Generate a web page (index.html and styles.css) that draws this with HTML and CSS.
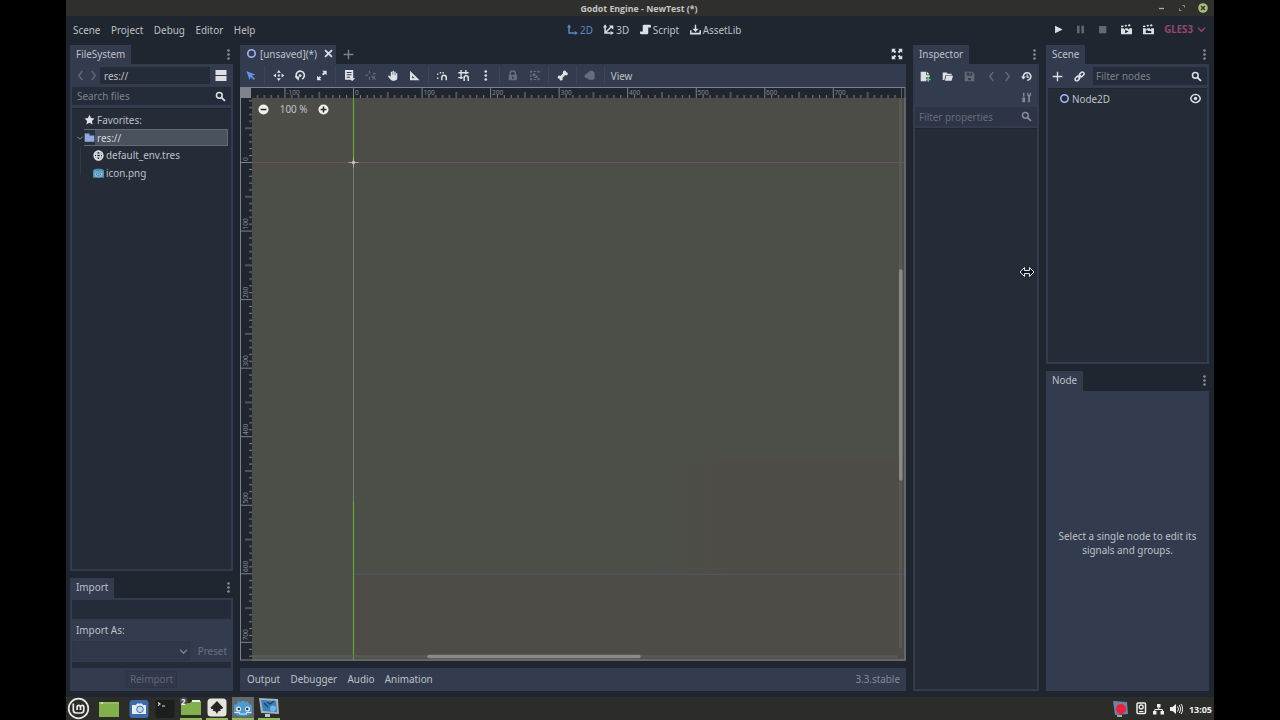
FILE: index.html
```
<!DOCTYPE html>
<html lang="en">
<head>
    <meta charset="UTF-8">
    <meta name="viewport" content="width=device-width, initial-scale=1.0">
    <title>Godot Engine - NewTest (*)</title>
    <link rel="stylesheet" href="styles.css">
</head>
<body>

    <!-- Icon set, 16x16 grid -->
    <svg class="sprite">
        <symbol id="i-dots" viewBox="0 0 16 16"><circle cx="8" cy="2.2" r="1.9"/><circle cx="8" cy="8" r="1.9"/><circle cx="8" cy="13.8" r="1.9"/></symbol>
        <symbol id="i-ring" viewBox="0 0 16 16"><circle cx="8" cy="8" r="5.4" fill="none" stroke="currentColor" stroke-width="2.3"/></symbol>
        <symbol id="i-close" viewBox="0 0 16 16"><path d="M3 3l10 10M13 3L3 13" fill="none" stroke="currentColor" stroke-width="2.6"/></symbol>
        <symbol id="i-plus" viewBox="0 0 16 16"><path d="M8 1v14M1 8h14" fill="none" stroke="currentColor" stroke-width="2"/></symbol>
        <symbol id="i-left" viewBox="0 0 16 16"><path d="M10.500 1.500L5.500 8l5 6.500" fill="none" stroke="currentColor" stroke-width="2"/></symbol>
        <symbol id="i-right" viewBox="0 0 16 16"><path d="M5.500 1.500l5 6.500-5 6.500" fill="none" stroke="currentColor" stroke-width="2"/></symbol>
        <symbol id="i-down" viewBox="0 0 16 16"><path d="M3 5.500l5 5 5-5" fill="none" stroke="currentColor" stroke-width="2"/></symbol>
        <symbol id="i-search" viewBox="0 0 16 16"><circle cx="6.300" cy="6.300" r="4.200" fill="none" stroke="currentColor" stroke-width="2.200"/><path d="M9.500 9.500l5 5" stroke="currentColor" stroke-width="2.600"/></symbol>
        <symbol id="i-split" viewBox="0 0 16 16"><path d="M0 0h16v7.200H0zM0 8.800h16V16H0z"/></symbol>
        <symbol id="i-star" viewBox="0 0 16 16"><path d="M8 1l2.200 4.700 5 .7-3.600 3.600.9 5.200L8 12.700l-4.500 2.500.9-5.200L.8 6.400l5-.7z"/></symbol>
        <symbol id="i-folder" viewBox="0 0 16 16"><path d="M1 2h7v3h7v9H1z"/></symbol>
        <symbol id="i-globe" viewBox="0 0 16 16"><circle cx="8" cy="8" r="6.300" fill="none" stroke="currentColor" stroke-width="2.400"/><ellipse cx="8" cy="8" rx="2.800" ry="6.300" fill="none" stroke="currentColor" stroke-width="1.700"/><path d="M1.500 6h13M1.500 10h13" stroke="currentColor" stroke-width="1.600"/></symbol>
        <symbol id="i-godot" viewBox="0 0 16 16"><path d="M0 3l4-2h8l4 2v11H0z" fill="#4c86ad"/><path d="M3 3l2 1h6l2-1 2 4v4H1V7z" fill="#5fa5cf"/><circle cx="4.600" cy="9" r="1.800" fill="#b7d3e3"/><circle cx="11.400" cy="9" r="1.800" fill="#b7d3e3"/><circle cx="4.800" cy="9" r=".9" fill="#333b4a"/><circle cx="11.200" cy="9" r=".9" fill="#333b4a"/><path d="M2 12h4v1h4v-1h4" stroke="#a5c8dc" fill="none"/></symbol>
        <symbol id="i-2d" viewBox="0 0 16 16"><path d="M3 4v9h8" fill="none" stroke="currentColor" stroke-width="2.200"/><path d="M0 5l3-4.500L6 5zM11 10l5 3-5 3z"/></symbol>
        <symbol id="i-3d" viewBox="0 0 16 16"><path d="M3 4v9h8M3 13l9-9" fill="none" stroke="currentColor" stroke-width="2.200"/><path d="M0 5l3-4.500L6 5zM11 10l5 3-5 3zM8.500 2H15v6.500z"/></symbol>
        <symbol id="i-script" viewBox="0 0 16 16"><path d="M6 1h8q2 0 2 2v2h-4v8q0 2-2 2H2q-2 0-2-2v-2h4V3q0-2 2-2z"/></symbol>
        <symbol id="i-asset" viewBox="0 0 16 16"><path d="M7 1h2v6h3.500L8 11.500 3.500 7H7z"/><path d="M1.200 9v5h13.600V9" fill="none" stroke="currentColor" stroke-width="2.200"/></symbol>
        <symbol id="i-expand" viewBox="0 0 16 16"><path d="M1 1h5.500L4.800 2.700 7 5 5 7 2.700 4.800 1 6.500zM15 1v5.500l-1.700-1.700L11 7 9 5l2.200-2.300L9.500 1zM1 15V9.500l1.700 1.700L5 9l2 2-2.200 2.300L6.500 15zM15 15H9.500l1.700-1.700L9 11l2-2 2.300 2.200L15 9.500z"/></symbol>
        <symbol id="i-play" viewBox="0 0 16 16"><path d="M3 2.500l11 5.500-11 5.500z"/></symbol>
        <symbol id="i-pause" viewBox="0 0 16 16"><path d="M3 2.500h3.600v11H3zM9.400 2.500H13v11H9.400z"/></symbol>
        <symbol id="i-stop" viewBox="0 0 16 16"><path d="M3 3h10.500v10.500H3z"/></symbol>
        <symbol id="i-clap" viewBox="0 0 16 16"><path d="M0 2.500L3 2l1 2.300-4 .5zM5 1.500L8 1l1 2.300-3 .5zM10 1l3-.5L14 3l-3 .5zM0 6h4v1.500h2V6h4v1.500h2V6h4v9H0z"/><path d="M6 8.500l5 2.500-5 2.500z" fill="#20262f"/></symbol>
        <symbol id="i-clap2" viewBox="0 0 16 16"><path d="M0 2.500L3 2l1 2.300-4 .5zM5 1.500L8 1l1 2.300-3 .5zM10 1l3-.5L14 3l-3 .5zM0 6h4v1.500h2V6h4v1.500h2V6h4v9H0z"/><path d="M4 9h3l1 1h4v3H4z" fill="#20262f"/></symbol>
        <symbol id="i-select" viewBox="0 0 16 16"><path d="M1.500 1.500l13 5-4.800 2 4.300 4.300-1.700 1.700L8 10.200l-1.800 4.300z"/></symbol>
        <symbol id="i-move" viewBox="0 0 16 16"><path d="M8 0l3 4H5zM8 16l-3-4h6zM0 8l4-3v6zM16 8l-4 3V5z"/><path d="M6.500 6.500h3v3h-3z"/></symbol>
        <symbol id="i-rotate" viewBox="0 0 16 16"><path d="M4 11.500A6 6 0 1 1 11.500 13" fill="none" stroke="currentColor" stroke-width="2.400"/><path d="M.5 9.500h7l-1.500 6z"/><circle cx="8.500" cy="8" r="2"/></symbol>
        <symbol id="i-scale" viewBox="0 0 16 16"><path d="M8.500 1H15v6.500l-2.200-2.200-2.600 2.600-2-2 2.600-2.600zM7.500 15H1V8.500l2.200 2.200L5 9l2 2-1.700 1.800z"/></symbol>
        <symbol id="i-list" viewBox="0 0 16 16"><path d="M1 0h12v12h3l-4.500 4L9 14H1z"/><path d="M3.500 3.500h7M3.500 7h7M3.500 10.500h5" stroke="#333b4e" stroke-width="1.500"/></symbol>
        <symbol id="i-pivot" viewBox="0 0 16 16"><path d="M6 1v4M6 10v4M0 7.500h4M11 6l4-1M9 9l6 5M14 9l-4 5" fill="none" stroke="currentColor" stroke-width="1.700"/></symbol>
        <symbol id="i-hand" viewBox="0 0 16 16"><path d="M5 3q1-1 2 0v4h.5V1.500q1-1 2 0V7h.6V2.500q1-1 2 0V8h.5V5q1-1 2 0v6q0 4-4 4.500H7Q4 14 1 9q.5-1.500 2-.8l2 1.600z"/></symbol>
        <symbol id="i-ruler" viewBox="0 0 16 16"><path d="M1 1l14 14H1zM4.200 8.500V12h3.500z" fill-rule="evenodd"/></symbol>
        <symbol id="i-snap" viewBox="0 0 16 16"><path d="M1 5h2v2H1zM5 3h2v2H5zM1 11h2v2H1z"/><path d="M8 15v-4q0-3.500 3.200-3.500T14.500 11v4M9 4h2" fill="none" stroke="currentColor" stroke-width="2.200"/></symbol>
        <symbol id="i-grid" viewBox="0 0 16 16"><path d="M4 0v13M11 0v6M0 4h15M0 11h7" fill="none" stroke="currentColor" stroke-width="2"/><path d="M8.500 16v-4.500q0-3 3-3t3 3V16" fill="none" stroke="currentColor" stroke-width="2.200"/></symbol>
        <symbol id="i-lock" viewBox="0 0 16 16"><path d="M4.300 8V5q0-3.500 3.700-3.500T11.700 5v3" fill="none" stroke="currentColor" stroke-width="2"/><path d="M2 7h12v8H2zM7 9.500V13h2V9.500z" fill-rule="evenodd"/></symbol>
        <symbol id="i-group" viewBox="0 0 16 16"><path d="M1 1h3v3H1zM12 1h3v3h-3zM1 12h3v3H1zM12 12h3v3h-3zM6 1.500h4v1.500H6zM1.500 6H3v4H1.500zM6 13h4v1.500H6zM5 5h4v4H5zM9.500 8H12v3.500H7.500V10h2z"/></symbol>
        <symbol id="i-bone" viewBox="0 0 16 16"><path d="M4.500 11.500l7-7" stroke="currentColor" stroke-width="4"/><circle cx="10.500" cy="3.200" r="2.400"/><circle cx="13" cy="5.600" r="2.400"/><circle cx="3" cy="10.500" r="2.400"/><circle cx="5.500" cy="13" r="2.400"/></symbol>
        <symbol id="i-mask" viewBox="0 0 16 16"><path d="M5 4q2-1 3-3h4l3 3v9l-3 1H7l-2-2H2L0 9l2-3z"/></symbol>
        <symbol id="i-newdoc" viewBox="0 0 16 16"><path d="M1 1h8v5h5v3H9v6H1z"/><path d="M10 1l4 4h-4z"/><path d="M12 9v6.500M8.800 12.200h6.500" stroke="#5fd37c" stroke-width="2.200"/></symbol>
        <symbol id="i-open" viewBox="0 0 16 16"><path d="M1 2h6l1 2h6v2H5L3.500 13H1zM6 7h10l-2 7H4.300z"/></symbol>
        <symbol id="i-save" viewBox="0 0 16 16"><path d="M1 1h11.500L15 3.500V15H1zM4 2v5h8V2H9.500v3h-2V2zM6 10v3.500h4V10z" fill-rule="evenodd"/></symbol>
        <symbol id="i-history" viewBox="0 0 16 16"><path d="M3.500 9A5.500 5.500 0 1 1 9 13.500" fill="none" stroke="currentColor" stroke-width="2.200"/><path d="M0 8h7l-3.500 4.500z"/><path d="M9 5v4h3" fill="none" stroke="currentColor" stroke-width="1.800"/></symbol>
        <symbol id="i-tools" viewBox="0 0 16 16"><path d="M3 1h2v6H3zM2 8h4v7H2zM9 1v3q0 2 1.500 2.500V15h2.500V6.500q1.500-.5 1.500-2.500V1h-1.700v3H10.700V1z"/></symbol>
        <symbol id="i-link" viewBox="0 0 16 16"><g fill="none" stroke="currentColor" stroke-width="2.200"><rect x="7.400" y="2.600" width="7.500" height="5" rx="2.500" transform="rotate(-45 11 5)"/><rect x="1.200" y="8.400" width="7.500" height="5" rx="2.500" transform="rotate(-45 5 11)"/><path d="M6 10l4-4"/></g></symbol>
        <symbol id="i-eye" viewBox="0 0 16 16"><path d="M8 2q5.500.500 7 6-1.500 5.500-7 6-5.500-.500-7-6Q2.500 2.500 8 2z" fill="none" stroke="currentColor" stroke-width="2.100"/><circle cx="8" cy="8" r="2.500"/></symbol>
        <symbol id="i-zoomout" viewBox="0 0 16 16"><circle cx="8" cy="8" r="7.300"/><path d="M3.800 8h8.400" stroke="#2c2d2a" stroke-width="2.200"/></symbol>
        <symbol id="i-zoomin" viewBox="0 0 16 16"><circle cx="8" cy="8" r="7.300"/><path d="M3.800 8h8.400M8 3.800v8.400" stroke="#2c2d2a" stroke-width="2.200"/></symbol>
    </svg>

    <div class="desktop">
        <div class="titlebar">
            <span class="title">Godot Engine - NewTest (*)</span>
            <div class="win-buttons">
                <svg width="8" height="8"><path d="M1 4.500h5" stroke="#a9b38b" stroke-width="1.300"/></svg>
                <svg width="8" height="8"><path d="M4.500 1.500h2v2M1.500 4.500v2h2" fill="none" stroke="#8d9874"/></svg>
                <svg width="10" height="10"><circle cx="5" cy="5" r="4.800" fill="#a9bd7a"/><path d="M3 3l4 4M7 3L3 7" stroke="#2f302c" stroke-width="1.300"/></svg>
            </div>
        </div>

        <div class="editor">
            <div class="menubar">
                <div class="menus">
                    <span>Scene</span><span>Project</span><span>Debug</span><span>Editor</span><span>Help</span>
                </div>
                <div class="workspaces">
                    <span class="active"><svg class="icon"><use href="#i-2d"/></svg>2D</span>
                    <span><svg class="icon"><use href="#i-3d"/></svg>3D</span>
                    <span><svg class="icon"><use href="#i-script"/></svg>Script</span>
                    <span><svg class="icon"><use href="#i-asset"/></svg>AssetLib</span>
                </div>
                <div class="run">
                    <svg class="icon"><use href="#i-play"/></svg>
                    <svg class="icon dim"><use href="#i-pause"/></svg>
                    <svg class="icon dim"><use href="#i-stop"/></svg>
                    <svg class="icon clap"><use href="#i-clap"/></svg>
                    <svg class="icon"><use href="#i-clap2"/></svg>
                    <span class="driver">GLES3 <svg class="icon"><use href="#i-down"/></svg></span>
                </div>
            </div>

            <div class="docks">
                <!-- Left dock -->
                <div class="column">
                    <div class="tabs"><span class="tab">FileSystem</span><svg class="icon more"><use href="#i-dots"/></svg></div>
                    <div class="panel filesystem">
                        <div class="path-row">
                            <svg class="icon dim"><use href="#i-left"/></svg>
                            <svg class="icon dim"><use href="#i-right"/></svg>
                            <div class="field path">res://</div>
                            <svg class="icon split"><use href="#i-split"/></svg>
                        </div>
                        <div class="field search"><span>Search files</span><svg class="icon"><use href="#i-search"/></svg></div>
                        <div class="tree">
                            <div class="item fav"><svg class="icon"><use href="#i-star"/></svg>Favorites:</div>
                            <div class="item root">
                                <svg class="icon arrow"><use href="#i-down"/></svg>
                                <div class="selected"><svg class="icon folder"><use href="#i-folder"/></svg>res://</div>
                            </div>
                            <div class="children">
                                <div class="item"><svg class="icon"><use href="#i-globe"/></svg>default_env.tres</div>
                                <div class="item"><svg class="icon"><use href="#i-godot"/></svg>icon.png</div>
                            </div>
                        </div>
                    </div>
                    <div class="tabs second"><span class="tab">Import</span><svg class="icon more"><use href="#i-dots"/></svg></div>
                    <div class="panel import">
                        <div class="import-file"></div>
                        <div class="import-label">Import As:</div>
                        <div class="import-as"><div class="dropdown"><svg class="icon"><use href="#i-down"/></svg></div><span>Preset</span></div>
                        <div class="import-opts"></div>
                        <div class="reimport">Reimport</div>
                    </div>
                </div>

                <!-- 2D view -->
                <div class="column">
                    <div class="tabs scenes">
                        <span class="tab"><svg class="icon ring"><use href="#i-ring"/></svg>[unsaved](*)<svg class="icon close"><use href="#i-close"/></svg></span>
                        <svg class="icon add"><use href="#i-plus"/></svg>
                        <svg class="icon expand"><use href="#i-expand"/></svg>
                    </div>
                    <div class="toolbar">
                        <svg class="tool active"><use href="#i-select"/></svg>
                        <i></i>
                        <svg class="tool"><use href="#i-move"/></svg>
                        <svg class="tool"><use href="#i-rotate"/></svg>
                        <svg class="tool"><use href="#i-scale"/></svg>
                        <i></i>
                        <svg class="tool"><use href="#i-list"/></svg>
                        <svg class="tool dim"><use href="#i-pivot"/></svg>
                        <svg class="tool"><use href="#i-hand"/></svg>
                        <svg class="tool"><use href="#i-ruler"/></svg>
                        <i></i>
                        <svg class="tool"><use href="#i-snap"/></svg>
                        <svg class="tool"><use href="#i-grid"/></svg>
                        <svg class="tool"><use href="#i-dots"/></svg>
                        <i></i>
                        <svg class="tool dim"><use href="#i-lock"/></svg>
                        <svg class="tool dim"><use href="#i-group"/></svg>
                        <i></i>
                        <svg class="tool"><use href="#i-bone"/></svg>
                        <i></i>
                        <svg class="tool dim"><use href="#i-mask"/></svg>
                        <i></i>
                        <span>View</span>
                    </div>
                    <div class="viewport">
                        <svg class="canvas" width="666" height="574">
                            <defs>
                                <pattern id="ticks-x" x="113" y="0" width="68.550" height="11" patternUnits="userSpaceOnUse">
                                    <path d="M.5 0v11M34.800 5v6M7.400 8v3M14.200 8v3M21.100 8v3M27.900 8v3M41.600 8v3M48.500 8v3M55.300 8v3M62.200 8v3" stroke="#868d95" stroke-width=".9"/>
                                </pattern>
                                <pattern id="ticks-y" x="0" y="75" width="12" height="68.550" patternUnits="userSpaceOnUse">
                                    <path d="M0 .5h12M5 34.800h7M9 7.400h3M9 14.200h3M9 21.100h3M9 27.900h3M9 41.600h3M9 48.500h3M9 55.300h3M9 62.200h3" stroke="#868d95" stroke-width=".9"/>
                                </pattern>
                            </defs>
                            <!-- rulers -->
                            <rect width="666" height="11" fill="#20262f"/>
                            <rect width="12" height="574" fill="#20262f"/>
                            <rect x="12" width="650" height="11" fill="url(#ticks-x)"/>
                            <rect y="11" width="12" height="563" fill="url(#ticks-y)"/>
                            <rect x="1" y="1" width="10" height="10" fill="#7e838a"/>
                            <g class="ruler-text">
                                <text x="46.500" y="7.500">-100</text><text x="115" y="7.500">0</text><text x="183.500" y="7.500">100</text><text x="252" y="7.500">200</text><text x="320.500" y="7.500">300</text><text x="389" y="7.500">400</text><text x="457.500" y="7.500">500</text><text x="526" y="7.500">600</text><text x="594.500" y="7.500">700</text>
                                <text transform="translate(7.500 74) rotate(-90)">0</text><text transform="translate(7.500 142.500) rotate(-90)">100</text><text transform="translate(7.500 211) rotate(-90)">200</text><text transform="translate(7.500 279.500) rotate(-90)">300</text><text transform="translate(7.500 348) rotate(-90)">400</text><text transform="translate(7.500 416.500) rotate(-90)">500</text><text transform="translate(7.500 485) rotate(-90)">600</text><text transform="translate(7.500 553.500) rotate(-90)">700</text>
                            </g>
                            <!-- axes and screen bounds -->
                            <path d="M12 75.500h101" stroke="#7d4b4b"/>
                            <path d="M114 75.500h551" stroke="#6f4f6b"/>
                            <path d="M114 487.300h551" stroke="#52586a"/>
                            <path d="M113.500 75v339" stroke="#727f6c"/>
                            <path d="M113.500 11v64M113.500 414v159" stroke="#68a338" stroke-width="1.200"/>
                            <path d="M108.500 75.500h10M113.500 70.500v10" stroke="#aaa9a4"/>
                            <circle cx="113.500" cy="75.500" r="1.700" fill="#c4bfb9"/>
                            <!-- scrollbars -->
                            <path d="M12 569.500h645M660.500 11v550" stroke="#60625e" stroke-width="3" opacity=".55"/>
                            <path d="M189 569.500h210" stroke="#8b8b86" stroke-width="3.500" stroke-linecap="round"/>
                            <path d="M660.800 184v208" stroke="#8b8b86" stroke-width="3.500" stroke-linecap="round"/>
                            <rect x=".5" y=".5" width="664.500" height="572.500" fill="none" stroke="#7d828a"/>
                        </svg>
                        <div class="zoom">
                            <svg class="icon"><use href="#i-zoomout"/></svg>
                            <span>100 %</span>
                            <svg class="icon"><use href="#i-zoomin"/></svg>
                        </div>
                    </div>
                    <div class="bottombar">
                        <span>Output</span><span>Debugger</span><span>Audio</span><span>Animation</span>
                        <span class="version">3.3.stable</span>
                    </div>
                </div>

                <!-- Inspector -->
                <div class="column">
                    <div class="tabs"><span class="tab">Inspector</span><svg class="icon more"><use href="#i-dots"/></svg></div>
                    <div class="panel inspector">
                        <div class="inspector-tools">
                            <svg class="icon"><use href="#i-newdoc"/></svg>
                            <svg class="icon"><use href="#i-open"/></svg>
                            <svg class="icon dim"><use href="#i-save"/></svg>
                            <svg class="icon dim"><use href="#i-left"/></svg>
                            <svg class="icon dim near"><use href="#i-right"/></svg>
                            <svg class="icon last"><use href="#i-history"/></svg>
                        </div>
                        <div class="object-tools"><svg class="icon"><use href="#i-tools"/></svg></div>
                        <div class="field filter"><span>Filter properties</span><svg class="icon"><use href="#i-search"/></svg></div>
                        <div class="tree"></div>
                    </div>
                </div>

                <!-- Right dock -->
                <div class="column">
                    <div class="tabs"><span class="tab">Scene</span><svg class="icon more"><use href="#i-dots"/></svg></div>
                    <div class="panel scene">
                        <div class="scene-tools">
                            <svg class="icon"><use href="#i-plus"/></svg>
                            <svg class="icon"><use href="#i-link"/></svg>
                            <div class="field"><span>Filter nodes</span><svg class="icon"><use href="#i-search"/></svg></div>
                        </div>
                        <div class="tree">
                            <div class="item"><svg class="icon ring"><use href="#i-ring"/></svg>Node2D<svg class="icon eye"><use href="#i-eye"/></svg></div>
                        </div>
                    </div>
                    <div class="tabs second"><span class="tab">Node</span><svg class="icon more"><use href="#i-dots"/></svg></div>
                    <div class="panel node">
                        <p>Select a single node to edit its signals and groups.</p>
                    </div>
                </div>
            </div>
        </div>

        <div class="taskbar">
            <div class="apps">
                <span class="app mint"><svg width="23" height="23" viewBox="0 0 23 23"><circle cx="11.500" cy="11.500" r="9.800" fill="none" stroke="#e8e8e8" stroke-width="1.700"/><path d="M6.300 6.500v6.500q0 3 3 3h4.500q3 0 3-3v-3q0-1.700-1.600-1.700T13.500 10v3M13.500 10q0-1.700-1.700-1.700T10.100 10v3" fill="none" stroke="#e8e8e8" stroke-width="1.700"/></svg></span>
                <span class="app"><svg width="22" height="22" viewBox="0 0 22 22"><path d="M1 4h20v15H1z" fill="#82b04c"/><path d="M1 4h20v2H1z" fill="#93be60"/><path d="M3 5h2" stroke="#fff"/></svg></span>
                <span class="app"><svg width="22" height="22" viewBox="0 0 22 22"><rect x="1.500" y="2" width="19" height="18" rx="3" fill="#3f68a8"/><path d="M4 7h4l1-1.500h5L15 7h3v9H4z" fill="#e3ebf3"/><circle cx="12" cy="11.300" r="3.300" fill="#c6d6e8" stroke="#4673b0"/></svg></span>
                <span class="app"><svg width="22" height="22" viewBox="0 0 22 22"><rect x="1.500" y="2" width="19" height="18" rx="2" fill="#1b1e1d"/><path d="M4 4.500l2 1.500-2 1.500M8 8h3" fill="none" stroke="#ddd" stroke-width="1.200"/></svg></span>
                <span class="app open"><svg width="22" height="22" viewBox="0 0 22 22"><path d="M1 6h9l2-2h9v14H1z" fill="#82b04c"/><path d="M12 3h8v2h-8z" fill="#eee"/><circle cx="3.500" cy="4" r="4" fill="#4b4c4a"/></svg><b>2</b></span>
                <span class="app open"><svg width="22" height="22" viewBox="0 0 22 22"><rect x="1.500" y="1.500" width="19" height="18" rx="3.500" fill="#e5e4df"/><path d="M11 4l6 6.500q0 1.500-3 1.500l1 1.500-3 1-1 2.500-1.500-2.500-3-1 1-1.500q-3 0-3-1.500z" fill="#252525"/></svg></span>
                <span class="app open current"><svg width="22" height="22" viewBox="0 0 22 22"><path d="M2 8l3-1 1-3 3 1.500V4h4v1.500L16 4l1 3 3 1v8q-3 3-9 3t-9-3z" fill="#4b9bd0"/><circle cx="6.500" cy="12" r="2.500" fill="#eee"/><circle cx="15.500" cy="12" r="2.500" fill="#eee"/><circle cx="6.800" cy="12" r="1.300" fill="#333"/><circle cx="15.200" cy="12" r="1.300" fill="#333"/><path d="M2.500 15.500h5v1.500h7v-1.500h5" fill="none" stroke="#d5e8f4"/></svg></span>
                <span class="app open"><svg width="22" height="22" viewBox="0 0 22 22"><path d="M1 1l19 1 1 15-18-1z" fill="#a4b3c0"/><path d="M3 3l15 1 1 11-14-1z" fill="#3a80bb"/><path d="M6 6l4 4M9 5l3 2 4-3" fill="none" stroke="#22456b" stroke-width="1.500"/><circle cx="15" cy="11.500" r="3" fill="#72b7de"/><path d="M7 17h5v3H7z" fill="#bcc4ca"/></svg></span>
            </div>
            <div class="tray">
                <svg width="16" height="18" viewBox="0 0 16 18"><path d="M0 1l14 1 1 12-13 1z" fill="#7182a5"/><path d="M4 15h5v2H4z" fill="#a5a8ad"/><circle cx="8" cy="9" r="5" fill="#e6233c"/></svg>
                <svg width="11" height="13" viewBox="0 0 11 13"><rect x="1" y="1" width="8.500" height="10.500" rx="1" fill="none" stroke="#eee" stroke-width="1.500"/><circle cx="5.200" cy="5" r="2" fill="none" stroke="#eee" stroke-width="1.300"/><path d="M3 9.500h4.500" stroke="#eee"/></svg>
                <svg width="11" height="12" viewBox="0 0 11 12"><path d="M4 1h3.500v3.500H4zM0 8h3.500v3.500H0zM7.500 8H11v3.500H7.500z" fill="#eee"/><path d="M5.700 4v2.500M1.800 8V6.500h7.600V8" fill="none" stroke="#eee"/></svg>
                <svg width="13" height="12" viewBox="0 0 13 12"><path d="M0 4h2.500L6 1v10L2.500 8H0z" fill="#eee"/><path d="M7.500 3.500q2 2.500 0 5M9.300 2q3 4 0 8M11 1q3.500 5 0 10" fill="none" stroke="#eee"/></svg>
                <span class="clock">13:05</span>
            </div>
        </div>

        <!-- Mouse pointer, horizontal resize -->
        <svg class="pointer" width="16" height="12" viewBox="0 0 16 12"><path d="M1 6l4.500-4.500v3h5v-3L15 6l-4.500 4.500v-3h-5v3z" fill="#15181e" stroke="#e3e5e8"/></svg>
    </div>

</body>
</html>
```
FILE: styles.css
```
* {
    box-sizing: border-box;
}

body {
    margin: 0;
    height: 720px;
    overflow: hidden;
    background-color: #000;
    color: #bfc2c8;
    font-family: "Noto Sans", sans-serif;
    font-size: 9.900px;
    line-height: 14px;
}

.sprite {
    display: none;
}

.desktop {
    position: relative;
    display: flex;
    flex-direction: column;
    width: 1148px;
    height: 720px;
    margin: 0 auto;
    background-color: #20262f;
}

.icon {
    flex: none;
    width: 11px;
    height: 11px;
    color: #dddfe3;
    fill: currentColor;
}

.icon.dim {
    color: #646a75;
}

/* TITLE BAR */
.titlebar {
    display: grid;
    grid-template-columns: 1fr auto 1fr;
    align-items: center;
    height: 16px;
    background-color: #2f2f2e;
}

.title {
    grid-column: 2;
    margin: 1px 2px 0 0;
    color: #c5c5c2;
    font-family: "Open Sans", sans-serif;
    font-size: 8.800px;
    font-weight: bold;
}

.win-buttons {
    display: flex;
    align-items: center;
    justify-content: flex-end;
    gap: 12px;
    padding-right: 6px;
}

/* EDITOR */
.editor {
    display: flex;
    flex-direction: column;
    height: 681px;
    padding: 0 5px 6px 4px;
}

.menubar {
    display: grid;
    grid-template-columns: 497px 1fr auto;
    align-items: center;
    height: 29px;
    padding-bottom: 2px;
}

.menus {
    display: flex;
    gap: 10.600px;
    padding-left: 3px;
}

.workspaces {
    display: flex;
    gap: 10.500px;
}

.workspaces span {
    display: flex;
    align-items: center;
    gap: 2px;
}

.workspaces .active,
.workspaces .active .icon {
    color: #5f87c6;
}

.run {
    display: flex;
    align-items: center;
    gap: 11px;
    padding-right: 2px;
}

.clap {
    margin-left: 2px;
}

.driver {
    display: flex;
    align-items: center;
    gap: 3px;
    margin-left: -1px;
    color: #974570;
    font-size: 9.700px;
    font-weight: bold;
}

.driver .icon {
    color: #974570;
}

.docks {
    display: grid;
    grid-template-columns: 163px 666px 126px 163px;
    gap: 7px;
    flex: 1;
}

.column {
    display: flex;
    flex-direction: column;
    min-width: 0;
}

.tabs {
    display: flex;
    align-items: center;
    justify-content: space-between;
    height: 19px;
}

.tabs.second {
    height: 20px;
    margin-top: 7px;
}

.tab {
    display: flex;
    align-items: center;
    height: 100%;
    padding: 0 6px 2px;
    background-color: #333b4e;
}

.more.icon {
    color: #888c94;
    margin: 0 -1px 1px 0;
}

.ring.icon {
    color: #a5b7f3;
}

.panel {
    display: flex;
    flex-direction: column;
    padding: 2px;
    background-color: #333b4e;
}

.field {
    display: flex;
    align-items: center;
    justify-content: space-between;
    background-color: #252c39;
    color: #7e838d;
}

.tree {
    flex: 1;
    background-color: #252c38;
    border-top: 1px solid #20262f;
}

.item {
    display: flex;
    align-items: center;
    height: 17.800px;
    gap: 2px;
}

/* FILESYSTEM */
.filesystem {
    height: 507px;
}

.path-row {
    display: flex;
    align-items: center;
    height: 20px;
    padding: 0 4px 1px 3px;
    gap: 2px;
}

.path {
    flex: 1;
    height: 17px;
    margin: 0 3px 0 -1px;
    padding-left: 4px;
    color: #bfc2c8;
}

.split.icon {
    width: 12px;
}

.search {
    height: 18px;
    margin: 1px 0 3px;
    padding: 0 5px;
}

.filesystem .tree {
    padding: 2px 3px 0 4px;
}

.fav {
    padding-left: 8px;
}

.root {
    gap: 0;
}

.arrow.icon {
    width: 8px;
    height: 8px;
    color: #878d98;
}

.selected {
    display: flex;
    align-items: center;
    flex: 1;
    gap: 2px;
    height: 17px;
    background-color: #4a525d;
    border: 1px solid #626a75;
    border-left: 0;
    color: #d5d7da;
}

.folder.icon {
    height: 15px;
    color: #90acdf;
    background-color: #26303f;
}

.children {
    height: 28px;
    margin-left: 4px;
    padding-left: 12px;
    border-left: 1px solid #30384a;
}

/* IMPORT */
.import {
    height: 93px;
}

.import-file {
    height: 19px;
    background-color: #252c39;
}

.import-label {
    padding: 4px 0 0 4px;
    height: 21px;
}

.import-as {
    display: flex;
    align-items: center;
    justify-content: space-between;
    height: 22px;
    padding-right: 4px;
    color: #6b7282;
}

.dropdown {
    display: flex;
    align-items: center;
    justify-content: flex-end;
    width: 118px;
    height: 20px;
    background-color: #303748;
    border: 1px solid #2e3545;
}

.dropdown .icon {
    color: #7a8190;
}

.import-opts {
    height: 6px;
    background-color: #252c39;
}

.reimport {
    align-self: center;
    width: 51px;
    height: 17px;
    margin-top: 3px;
    border: 1px solid #2d3445;
    background-color: #313849;
    color: #626978;
    text-align: center;
}

/* SCENE TABS AND 2D TOOLBAR */
.scenes {
    justify-content: flex-start;
}

.scenes .tab {
    gap: 3px;
    padding-right: 2px;
}

.close.icon {
    margin-left: 3px;
}

.add.icon {
    margin: 0 0 1px 7px;
    color: #7e838b;
}

.expand.icon {
    width: 12px;
    height: 12px;
    margin: 0 3px 1px auto;
}

.toolbar {
    display: flex;
    align-items: center;
    height: 23px;
    background-color: #333b4e;
}

.tool {
    flex: none;
    width: 21.600px;
    height: 11px;
    color: #dfe1e5;
    fill: currentColor;
}

.tool.active {
    color: #668fe0;
}

.tool.dim {
    color: #666d7b;
}

.toolbar i {
    width: 1px;
    height: 19px;
    margin: 0 2.600px;
    background-color: #3d4558;
}

.toolbar span {
    margin-left: 3.500px;
}

.viewport {
    position: relative;
    height: 574px;
    background-color: #4b4f48;
    background-image:
        linear-gradient(#4d4d48, #4d4d48),
        linear-gradient(#4f4c47, #4f4c47),
        linear-gradient(to right, rgba(79, 76, 71, 0), #4f4c47 30%);
    background-position: 0 0, 100% 100%, 100% 373px;
    background-size: 100% 75px, 552px 87px, 250px 114px;
    background-repeat: no-repeat;
}

.canvas {
    display: block;
}

.ruler-text {
    fill: #858b92;
    font-size: 6.500px;
}

.zoom {
    position: absolute;
    top: 15px;
    left: 18px;
    display: flex;
    align-items: center;
    gap: 10.800px;
}

.zoom .icon {
    color: #f0f0ee;
}

.bottombar {
    display: flex;
    align-items: center;
    gap: 10.300px;
    height: 23px;
    margin-top: 7px;
    padding: 0 6px 2px 7px;
    background-color: #333b4e;
}

.version {
    margin-left: auto;
    color: #858b96;
}

/* INSPECTOR */
.inspector {
    flex: 1;
}

.inspector-tools {
    display: flex;
    align-items: center;
    height: 21px;
    gap: 11px;
    padding-left: 5px;
}

.near.icon {
    margin-left: -6px;
}

.last.icon {
    margin-left: -3px;
}

.object-tools {
    display: flex;
    align-items: center;
    justify-content: flex-end;
    height: 20px;
    padding-right: 5px;
}

.object-tools .icon,
.filter .icon {
    color: #858a95;
}

.filter {
    height: 19px;
    margin-bottom: 2px;
    padding: 0 5px 0 4px;
    background-color: #2d3445;
    color: #656c7a;
}

/* SCENE */
.scene {
    height: 300px;
}

.scene-tools {
    display: flex;
    align-items: center;
    height: 22px;
    gap: 11px;
    padding: 0 0 2px 4px;
}

.scene-tools .field {
    flex: 1;
    height: 18px;
    margin-left: -3px;
    padding: 0 5px 0 3px;
}

.scene .tree {
    padding: 1px 6px 0 11px;
}

.eye {
    margin-left: auto;
}

.node {
    flex: 1;
    align-items: center;
    justify-content: center;
}

.node p {
    width: 145px;
    margin: 4px 0 0;
    text-align: center;
}

/* TASKBAR */
.taskbar {
    display: flex;
    justify-content: space-between;
    height: 23px;
    background-color: #2c2c29;
}

.apps {
    display: flex;
    align-items: center;
    gap: 4px;
}

.app {
    position: relative;
    display: flex;
    align-items: center;
    height: 23px;
}

.mint {
    margin: 0 4px 0 1px;
}

.app:nth-child(2) {
    margin-right: 4px;
}

.app b {
    position: absolute;
    top: -2px;
    left: 1px;
    color: #eee;
    font-size: 8px;
}

.open {
    border-bottom: 2px solid #93b85c;
}

.current {
    background-color: #626a6d;
}

.tray {
    display: flex;
    align-items: center;
    gap: 6px;
    padding-right: 2px;
}

.tray svg:first-child {
    margin-right: 1px;
}

.clock {
    color: #eee;
    font-size: 9px;
    font-weight: bold;
    margin-top: 2px;
}

.pointer {
    position: absolute;
    top: 266px;
    left: 953px;
}
```
